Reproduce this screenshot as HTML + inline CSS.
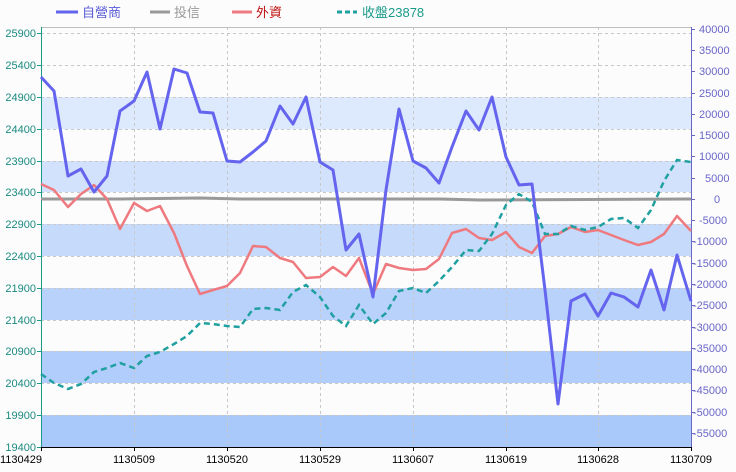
<!DOCTYPE html>
<html><head><meta charset="utf-8"><style>
html,body{margin:0;padding:0;background:#fcfcfc;}
svg{display:block;font-family:"Liberation Sans","Noto Sans CJK TC",sans-serif;}
</style></head><body>
<svg width="736" height="472" viewBox="0 0 736 472" xmlns="http://www.w3.org/2000/svg">
<rect width="736" height="472" fill="#fcfcfc"/>
<!-- bands -->
<rect x="41" y="97" width="650" height="32" fill="#dde9fd"/>
<rect x="41" y="161" width="650" height="31" fill="#d2e2fc"/>
<rect x="41" y="224" width="650" height="32" fill="#c6dafc"/>
<rect x="41" y="288" width="650" height="32" fill="#b9d2fb"/>
<rect x="41" y="351" width="650" height="32" fill="#b0cdfb"/>
<rect x="41" y="415" width="650" height="32" fill="#a9c9fa"/>
<!-- grid -->
<g stroke="#c8c8c8" stroke-dasharray="3,3" stroke-width="1">
<line x1="41" y1="33.5" x2="691" y2="33.5"/><line x1="41" y1="65.5" x2="691" y2="65.5"/><line x1="41" y1="97.5" x2="691" y2="97.5"/><line x1="41" y1="129.5" x2="691" y2="129.5"/><line x1="41" y1="161.5" x2="691" y2="161.5"/><line x1="41" y1="192.5" x2="691" y2="192.5"/><line x1="41" y1="224.5" x2="691" y2="224.5"/><line x1="41" y1="256.5" x2="691" y2="256.5"/><line x1="41" y1="288.5" x2="691" y2="288.5"/><line x1="41" y1="320.5" x2="691" y2="320.5"/><line x1="41" y1="351.5" x2="691" y2="351.5"/><line x1="41" y1="383.5" x2="691" y2="383.5"/><line x1="41" y1="415.5" x2="691" y2="415.5"/>
<line x1="134.5" y1="27" x2="134.5" y2="447"/><line x1="227.5" y1="27" x2="227.5" y2="447"/><line x1="320.5" y1="27" x2="320.5" y2="447"/><line x1="413.5" y1="27" x2="413.5" y2="447"/><line x1="506.5" y1="27" x2="506.5" y2="447"/><line x1="598.5" y1="27" x2="598.5" y2="447"/>
</g>
<line x1="41" y1="27.5" x2="691" y2="27.5" stroke="#c0c0c0"/>
<!-- axes -->
<line x1="41.5" y1="27" x2="41.5" y2="447" stroke="#1a9a8a"/>
<line x1="691.5" y1="27" x2="691.5" y2="447" stroke="#6a66c8"/>
<line x1="41" y1="447.5" x2="692" y2="447.5" stroke="#000"/>
<g stroke="#1a9a8a"><path d="M37 33.5h4M37 65.5h4M37 97.5h4M37 129.5h4M37 161.5h4M37 192.5h4M37 224.5h4M37 256.5h4M37 288.5h4M37 320.5h4M37 351.5h4M37 383.5h4M37 415.5h4M37 447.5h4"/></g>
<g fill="#1a8a80" font-size="11" text-anchor="end">
<text x="36" y="37">25900</text><text x="36" y="69">25400</text><text x="36" y="101">24900</text><text x="36" y="133">24400</text><text x="36" y="165">23900</text><text x="36" y="196">23400</text><text x="36" y="228">22900</text><text x="36" y="260">22400</text><text x="36" y="292">21900</text><text x="36" y="324">21400</text><text x="36" y="355">20900</text><text x="36" y="387">20400</text><text x="36" y="419">19900</text><text x="36" y="451">19400</text>
</g>
<g stroke="#6a66c8"><path d="M691 29.5h4M691 50.5h4M691 71.5h4M691 93.5h4M691 114.5h4M691 135.5h4M691 156.5h4M691 178.5h4M691 199.5h4M691 220.5h4M691 241.5h4M691 263.5h4M691 284.5h4M691 305.5h4M691 327.5h4M691 348.5h4M691 369.5h4M691 390.5h4M691 412.5h4M691 433.5h4"/></g>
<g fill="#6a66c8" font-size="11">
<text x="699" y="33">40000</text><text x="699" y="54">35000</text><text x="699" y="75">30000</text><text x="699" y="97">25000</text><text x="699" y="118">20000</text><text x="699" y="139">15000</text><text x="699" y="160">10000</text><text x="705" y="182">5000</text><text x="714" y="203">0</text><text x="699" y="224">-5000</text><text x="693" y="245">-10000</text><text x="693" y="267">-15000</text><text x="693" y="288">-20000</text><text x="693" y="309">-25000</text><text x="693" y="331">-30000</text><text x="693" y="352">-35000</text><text x="693" y="373">-40000</text><text x="693" y="394">-45000</text><text x="693" y="416">-50000</text><text x="693" y="437">-55000</text>
</g>
<g stroke="#000"><path d="M41.5 447v4M134.5 447v4M227.5 447v4M320.5 447v4M413.5 447v4M506.5 447v4M598.5 447v4M691.5 447v4"/></g>
<g fill="#000" font-size="11" text-anchor="middle">
<text x="21" y="463">1130429</text><text x="134" y="463">1130509</text><text x="227" y="463">1130520</text><text x="320" y="463">1130529</text><text x="413" y="463">1130607</text><text x="506" y="463">1130619</text><text x="598" y="463">1130628</text><text x="691" y="463">1130709</text>
</g>
<!-- series -->
<polyline fill="none" stroke="#999" stroke-width="3" points="41,199 120,199 200,198 240,199 440,199 480,200 691,199"/>
<polyline fill="none" stroke="#ee7a80" stroke-width="2.5" stroke-linejoin="round" points="41,184 54,190 68,207 81,194 94,185 107,199 120,229 134,203 147,211 160,206 174,233 187,266 200,294 213,290 227,286 240,273 253,246 266,247 280,258 293,262 306,278 320,277 333,267 346,276 359,258 373,294 386,264 399,268 413,270 426,269 439,259 452,233 466,229 479,238 492,240 506,232 519,247 532,253 545,236 558,234 571,227 585,232 598,230 611,235 624,240 638,245 651,242 664,234 677,216 691,231"/>
<polyline fill="none" stroke="#20a0a0" stroke-width="2.5" stroke-dasharray="6,4" points="41,374 54,383 68,389 81,384 94,372 107,368 120,363 134,368 147,356 160,352 174,344 187,336 200,323 213,324 227,326 240,327 253,309 266,308 280,310 293,292 306,285 320,297 333,316 346,326 359,305 373,324 386,313 399,291 413,288 426,293 439,281 452,267 466,250 479,251 492,234 506,205 519,194 532,202 545,234 558,234 571,226 585,230 598,227 611,219 624,218 638,228 651,210 664,181 677,160 691,162"/>
<polyline fill="none" stroke="#6464ee" stroke-width="3" stroke-linejoin="round" points="41,77 54,91 68,176 81,169 94,192 107,176 120,111 134,101 147,72 160,129 174,69 187,73 200,112 213,113 227,161 240,162 253,152 266,141 280,106 293,124 306,97 320,162 333,170 346,250 359,234 373,297 386,190 399,109 413,161 426,168 439,183 452,147 466,111 479,130 492,97 506,157 519,185 532,184 545,290 558,404 571,301 585,294 598,316 611,293 624,297 638,307 651,270 664,310 677,255 691,301"/>
<!-- legend -->
<line x1="56" y1="12" x2="78" y2="12" stroke="#6464ee" stroke-width="3"/>
<text x="82" y="17" font-size="13" fill="#5a5ad8">自營商</text>
<line x1="150" y1="12" x2="170" y2="12" stroke="#999" stroke-width="3"/>
<text x="174" y="17" font-size="13" fill="#999">投信</text>
<line x1="232" y1="12" x2="252" y2="12" stroke="#ee7a80" stroke-width="3"/>
<text x="256" y="17" font-size="13" fill="#c01010">外資</text>
<line x1="337" y1="12" x2="357" y2="12" stroke="#20a0a0" stroke-width="3" stroke-dasharray="5,3"/>
<text x="362" y="17" font-size="13" fill="#1a9a8a">收盤23878</text>
</svg>
</body></html>
